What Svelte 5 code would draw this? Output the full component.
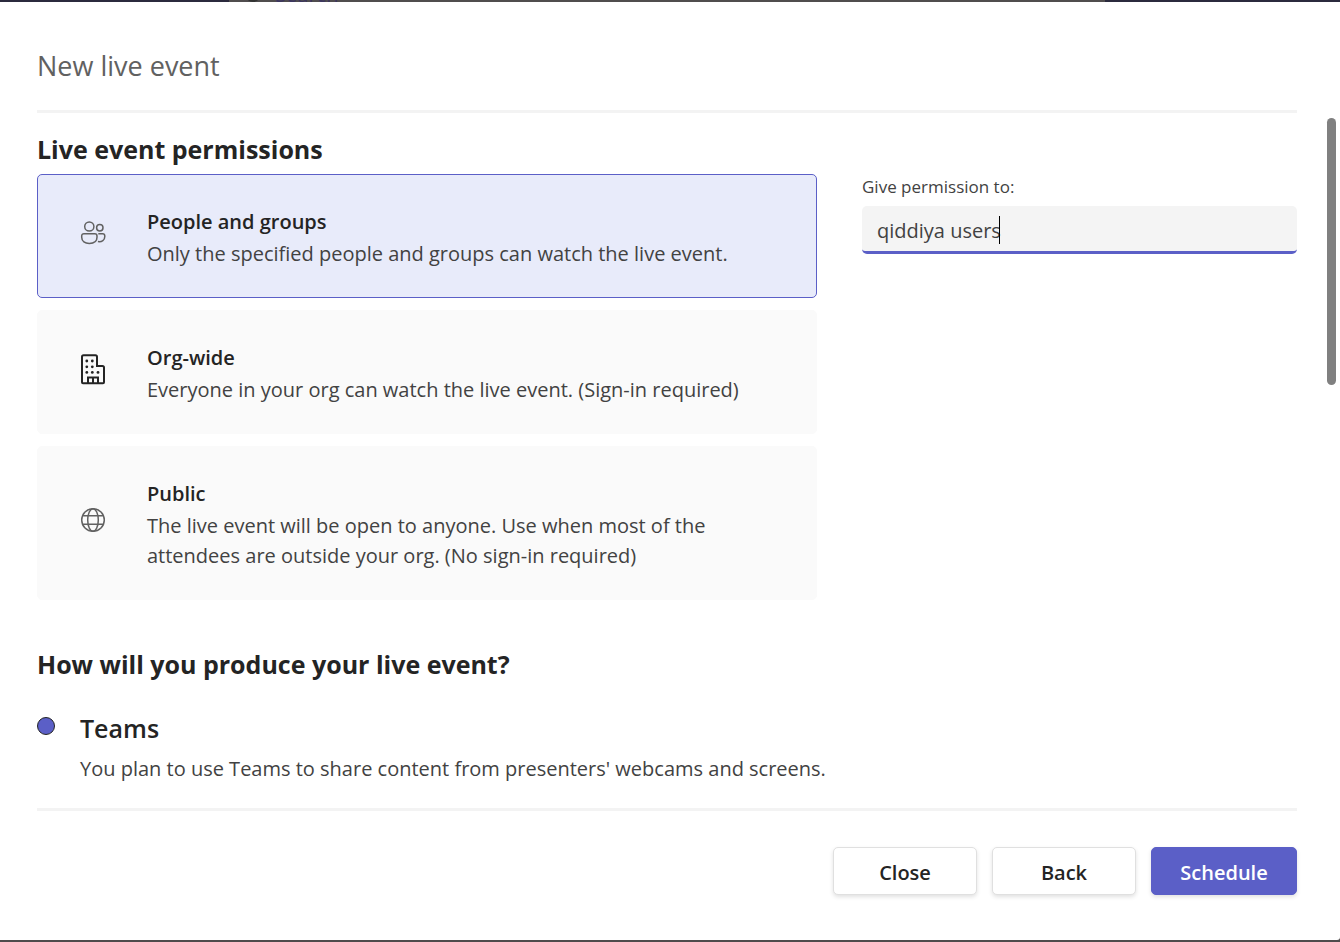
<script>
	let permission = 'people';
	let producer = 'teams';
	let people = 'qiddiya users';

	const options = [
		{
			id: 'people',
			title: 'People and groups',
			text: 'Only the specified people and groups can watch the live event.'
		},
		{
			id: 'org',
			title: 'Org-wide',
			text: 'Everyone in your org can watch the live event. (Sign-in required)'
		},
		{
			id: 'public',
			title: 'Public',
			text: 'The live event will be open to anyone. Use when most of the attendees are outside your org. (No sign-in required)'
		}
	];
</script>

<div class="page">
	<div class="app-bar">
		<div class="search">
			<svg width="16" height="16" viewBox="0 0 16 16"><circle cx="8" cy="8" r="7" /></svg>
			<span>Search</span>
		</div>
	</div>

	<div class="dialog" role="dialog" aria-labelledby="dialog-title">
		<header>
			<h1 id="dialog-title">New live event</h1>
		</header>

		<div class="content">
			<section>
				<h2 id="permissions">Live event permissions</h2>
				<div class="columns">
					<div class="cards" role="radiogroup" aria-labelledby="permissions">
						{#each options as option}
							<label class="card" class:selected={permission == option.id}>
								<input type="radio" name="permission" value={option.id} bind:group={permission} />
								<span class="icon">
									{#if option.id == 'people'}
										<svg width="26" height="26" viewBox="0 0 26 26">
											<circle cx="9.3" cy="6.5" r="4.6" />
											<circle cx="19.8" cy="7.8" r="3.2" />
											<path d="M3.9 13.7h10.9a2.2 2.2 0 0 1 2.2 2.2v1.3c0 4.2-3.4 6.2-7.7 6.2s-7.6-2-7.6-6.2v-1.3a2.2 2.2 0 0 1 2.2-2.2z" />
											<path d="M18.3 13.7h4.3a2.2 2.2 0 0 1 2.2 2.2v.7c0 3.6-2.9 5.7-6.9 5" />
										</svg>
									{:else if option.id == 'org'}
										<svg class="building" width="26" height="32" viewBox="0 0 26 32">
											<path d="M2 29.2V3.8a1.6 1.6 0 0 1 1.6-1.6h11.8A1.6 1.6 0 0 1 17 3.8V13h5.4a1.6 1.6 0 0 1 1.6 1.6v14.6a1 1 0 0 1-1 1H3a1 1 0 0 1-1-1z" />
											<path d="M8 30v-5.6h10V30M13 24.4V30" />
											<g class="dots">
												<circle cx="6.8" cy="8" r="1.4" /><circle cx="12.3" cy="8" r="1.4" />
												<circle cx="6.8" cy="13.8" r="1.4" /><circle cx="12.3" cy="13.8" r="1.4" />
												<circle cx="6.8" cy="19.4" r="1.4" /><circle cx="12.3" cy="19.4" r="1.4" /><circle cx="18" cy="19.4" r="1.4" />
											</g>
										</svg>
									{:else}
										<svg width="26" height="26" viewBox="0 0 26 26">
											<circle cx="13" cy="13" r="11.3" />
											<ellipse cx="13" cy="13" rx="5.3" ry="11.3" />
											<path d="M2.5 8.8h21M2.5 17.2h21" />
										</svg>
									{/if}
								</span>
								<span class="text">
									<strong>{option.title}</strong>
									<span>{option.text}</span>
								</span>
							</label>
						{/each}
					</div>

					<div class="permit">
						<label for="people">Give permission to:</label>
						<div class="field">
							<input id="people" type="text" autocomplete="off" bind:value={people} />
							<span class="caret"></span>
						</div>
					</div>
				</div>
			</section>

			<section>
				<h2>How will you produce your live event?</h2>
				<label class="producer">
					<input type="radio" name="producer" value="teams" bind:group={producer} />
					<span class="text">
						<strong>Teams</strong>
						<span>You plan to use Teams to share content from presenters' webcams and screens.</span>
					</span>
				</label>
			</section>
		</div>
		<div class="scroll-thumb"></div>

		<footer>
			<button>Close</button>
			<button>Back</button>
			<button class="primary">Schedule</button>
		</footer>
	</div>
</div>

<style>
	:global(body) {
		background: #4f4b4c;
	}

	.page {
		height: 100vh;
		box-sizing: border-box;
		padding-bottom: 2px;
		display: flex;
		flex-direction: column;
		font-family: "Segoe UI", "Open Sans", "Noto Sans", sans-serif;
		font-size: 20px;
		line-height: 30px;
		color: #242424;
	}

	.app-bar {
		height: 2px;
		flex-shrink: 0;
		overflow: hidden;
		background: #2b2a3d;
	}

	.search {
		width: 65.4%;
		height: 2px;
		margin-left: 17.1%;
		padding-left: 16px;
		box-sizing: border-box;
		display: flex;
		align-items: flex-end;
		gap: 14px;
		background: #504d4e;
		color: #3b3560;
	}

	.search svg {
		fill: none;
		stroke: #333;
		stroke-width: 2;
	}

	.search span {
		line-height: 14px;
	}

	.dialog {
		position: relative;
		flex: 1;
		min-height: 0;
		display: flex;
		flex-direction: column;
		padding: 0 43px 0 37px;
		background: #fff;
		border-radius: 0 0 3px 0;
	}

	header {
		padding: 46px 0 26px;
		border-bottom: 3px solid #f3f3f3;
	}

	h1 {
		margin: 0;
		font-size: 27px;
		line-height: 36px;
		font-weight: 400;
		color: #616161;
	}

	h2 {
		margin: 0;
		font-size: 25px;
		line-height: 36px;
		font-weight: 700;
	}

	.content {
		flex: 1;
		min-height: 0;
		padding-top: 18px;
		overflow: hidden;
		display: flex;
		flex-direction: column;
		gap: 46px;
	}

	.columns {
		display: grid;
		grid-template-columns: 780fr 435fr;
		column-gap: 45px;
		padding-top: 7px;
	}

	.cards {
		display: flex;
		flex-direction: column;
		gap: 12px;
	}

	.card {
		display: flex;
		align-items: center;
		padding: 32px 70px 28px 42px;
		border: 1px solid #fafafa;
		border-radius: 5px;
		background: #fafafa;
	}

	.card.selected {
		border-color: #5b5fc7;
		background: #e8ebfa;
	}

	.card input {
		position: absolute;
		opacity: 0;
	}

	.icon {
		width: 67px;
		flex-shrink: 0;
		padding-bottom: 10px;
	}

	.icon svg {
		display: block;
		fill: none;
		stroke: #616161;
		stroke-width: 1.5;
	}

	.icon svg.building {
		stroke: #242424;
		stroke-width: 2;
	}

	.icon .dots {
		fill: #242424;
		stroke: none;
	}

	.text {
		display: flex;
		flex-direction: column;
		gap: 2px;
		color: #424242;
	}

	.text strong {
		font-weight: 600;
		color: #242424;
	}

	.permit label {
		display: block;
		font-size: 17px;
		line-height: 24px;
		padding: 1px 0 7px;
		color: #424242;
	}

	.field {
		display: flex;
		align-items: center;
		height: 45px;
		padding: 0 15px;
		border-bottom: 3px solid #5b5fc7;
		border-radius: 5px;
		background: #f4f4f4;
	}

	.field input {
		field-sizing: content;
		min-width: 0;
		padding: 4px 0 0;
		border: 0;
		outline: 0;
		background: none;
		font: inherit;
		color: #424242;
		caret-color: transparent;
	}

	.caret {
		width: 1px;
		height: 28px;
		margin: 2px 0 0 -2px;
		background: #000;
	}

	.producer {
		display: flex;
		align-items: flex-start;
		gap: 25px;
		padding-top: 28px;
	}

	.producer input {
		appearance: none;
		width: 18px;
		height: 18px;
		margin: 7px 0 0;
		border: 1px solid #242424;
		border-radius: 50%;
		background: #fff;
	}

	.producer input:checked {
		background: #5b5fc7;
	}

	.producer .text {
		gap: 8px;
	}

	.producer strong {
		font-size: 25px;
		line-height: 36px;
	}

	.scroll-thumb {
		position: absolute;
		top: 116px;
		right: 4px;
		width: 9px;
		height: 267px;
		border-radius: 5px;
		background: #808080;
	}

	footer {
		display: flex;
		justify-content: flex-end;
		gap: 15px;
		padding: 36px 0 45px;
		border-top: 3px solid #f3f3f3;
	}

	button {
		min-width: 144px;
		height: 48px;
		padding: 3px 26px 0;
		border: 1px solid #e0e0e0;
		border-radius: 5px;
		background: #fff;
		box-shadow: 0 2px 4px rgba(0, 0, 0, 0.12);
		font: inherit;
		font-weight: 600;
		color: #242424;
	}

	button.primary {
		min-width: 146px;
		border-color: #5b5fc7;
		background: #5b5fc7;
		color: #fff;
	}
</style>
